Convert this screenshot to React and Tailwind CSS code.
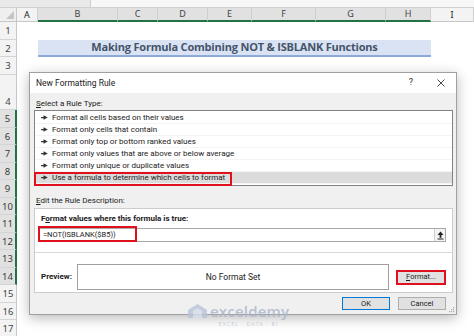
const cols = [
  { l: 'A', w: 'w-[21px]', sel: false },
  { l: 'B', w: 'w-[80px]', sel: true },
  { l: 'C', w: 'w-[40px]', sel: true },
  { l: 'D', w: 'w-[50px]', sel: true },
  { l: 'E', w: 'w-[44px]', sel: true },
  { l: 'F', w: 'w-[64px]', sel: true },
  { l: 'G', w: 'w-[70px]', sel: true },
  { l: 'H', w: 'w-[45px]', sel: true },
  { l: 'I', w: 'w-[43px]', sel: false },
];

const rows = Array.from({ length: 17 }, (_, i) => ({
  n: i + 1,
  h: i === 3 ? 'h-[35.5px]' : 'h-[17.5px]',
  sel: i >= 4 && i <= 13,
}));

const ruleTypes = [
  'Format all cells based on their values',
  'Format only cells that contain',
  'Format only top or bottom ranked values',
  'Format only values that are above or below average',
  'Format only unique or duplicate values',
  'Use a formula to determine which cells to format',
];

const Pointer = () => (
  <svg width="7" height="5" viewBox="0 0 7 5" className="shrink-0">
    <rect x="0" y="2" width="3" height="1.2" fill="#333" />
    <polygon points="2.5,0.3 6.8,2.6 2.5,4.8" fill="#333" />
  </svg>
);

const RowHeader = ({ row }) => (
  <div
    className={
      'w-[17px] shrink-0 flex items-end justify-center text-[9.5px] leading-none border-b border-[#d4d4d4] ' +
      (row.sel
        ? 'bg-[#e1e1e1] text-[#3a3a3a] border-r-2 border-r-[#217346]'
        : 'bg-[#f3f3f3] text-[#444] border-r border-r-[#c8c8c8]')
    }
  >
    <span className="mb-[3px]">{row.n}</span>
  </div>
);

const Sheet = () => (
  <div className="flex flex-col">
    {/* formula bar edge */}
    <div className="h-[8px] flex bg-[#e9e9e9] border-b border-[#d0d0d0]">
      <div className="w-[90px]" />
      <div className="flex-1 bg-[#f7f7f7] border-l border-[#d0d0d0]" />
    </div>
    {/* column headers */}
    <div className="h-[14px] flex text-[9px] text-[#444]">
      <div className="w-[17px] shrink-0 bg-[#efefef] border-r border-b border-[#c8c8c8] relative">
        <svg width="8" height="8" className="absolute right-[2px] bottom-[2px]">
          <polygon points="8,0 8,8 0,8" fill="#c4c4c4" />
        </svg>
      </div>
      {cols.map((c) => (
        <div
          key={c.l}
          className={
            c.w +
            ' shrink-0 flex items-center justify-center border-r border-[#cfcfcf] ' +
            (c.sel ? 'bg-[#e1e1e1] border-b-2 border-b-[#217346]' : 'bg-[#f3f3f3] border-b border-b-[#c8c8c8] text-[#222]')
          }
        >
          {c.l}
        </div>
      ))}
    </div>
    {rows.map((r) => (
      <div key={r.n} className={r.h + ' flex shrink-0'}>
        <RowHeader row={r} />
        {r.n === 2 ? (
          <>
            <div className="w-[21px] shrink-0" />
            <div className="w-[393px] shrink-0 bg-[#dae3f3] border-b-2 border-[#8eaadb] flex items-center justify-center font-['Open_Sans',sans-serif] font-bold text-[11px] text-[#44546a] tracking-[-0.2px]">
              Making Formula Combining NOT &amp; ISBLANK Functions
            </div>
            <div className="flex-1" />
          </>
        ) : (
          <div className="flex-1 bg-white" />
        )}
      </div>
    ))}
  </div>
);

const Dialog = () => (
  <div className="absolute left-[29px] top-[72px] w-[428px] h-[243px] flex flex-col bg-white border border-[#a0a0a0] shadow-[0_3px_12px_rgba(0,0,0,0.28)] text-[#1a1a1a] font-['Roboto',sans-serif] text-[8px]">
    <div className="h-[20px] shrink-0 flex items-center px-[5px] bg-white">
      <span className="text-[8.5px] pl-[1px]">New Formatting Rule</span>
      <span className="ml-auto text-[9px] text-[#333] mr-[24px]">?</span>
      <svg width="8" height="8" viewBox="0 0 8 8" className="mr-[6px]">
        <path d="M0.5 0.5 L7.5 7.5 M7.5 0.5 L0.5 7.5" stroke="#333" strokeWidth="0.9" />
      </svg>
    </div>
    <div className="flex-1 bg-[#f0f0f0] px-[4px] flex flex-col relative">
      <div className="pt-[5px] h-[17px] px-[2px] leading-[12px]">
        <span className="underline">S</span>elect a Rule Type:
      </div>
      <div className="w-[419px] h-[76px] border border-[#828282] bg-white py-[1px]">
        {ruleTypes.map((t, i) => (
          <div
            key={t}
            className={
              'h-[12px] flex items-center gap-[4px] pl-[6px] border-b border-[#f4f4f4] ' +
              (i === 5 ? 'bg-[#dcdcdc]' : '')
            }
          >
            <Pointer />
            <span>{t}</span>
          </div>
        ))}
      </div>
      <div className="mt-[9px] h-[13px] px-[2px] leading-[12px]">
        <span className="underline">E</span>dit the Rule Description:
      </div>
      <div className="w-[419px] h-[85px] border border-[#cccccc] bg-white flex flex-col">
        <div className="pt-[4px] h-[16px] pl-[6px] leading-[12px] font-bold">
          F<span className="underline">o</span>rmat values where this formula is true:
        </div>
        <div className="mt-[3px] ml-[4px] mr-[6px] h-[14px] flex border border-[#a8a8a8] bg-white">
          <div className="flex-1 flex items-center pl-[3px] text-[7.5px]">=NOT(ISBLANK($B5))</div>
          <div className="w-[11px] border-l border-[#cfcfcf] bg-[#f4f4f4] flex items-center justify-center">
            <svg width="7" height="9" viewBox="0 0 7 9">
              <polygon points="3.5,0.5 6.5,4 0.5,4" fill="#222" />
              <rect x="2.6" y="3.8" width="1.8" height="3" fill="#222" />
              <rect x="0.5" y="7.5" width="6" height="1" fill="#222" />
            </svg>
          </div>
        </div>
        <div className="mt-[10px] border-t border-[#d8d8d8]" />
        <div className="mt-[11px] flex items-center pl-[6px] pr-[6px]">
          <span className="w-[36px] font-bold">Preview:</span>
          <div className="w-[312px] h-[26px] border border-[#a0a0a0] bg-white flex items-center justify-center text-[8.5px]">
            No Format Set
          </div>
          <div className="ml-[7px] w-[50px] h-[15px] border-2 border-[#e0101c] bg-[#e1e1e1] flex items-center justify-center text-[7.5px]">
            <span className="underline">F</span>ormat...
          </div>
        </div>
      </div>
      <div className="mt-[4px] flex justify-end gap-[8px] pr-[6px] text-[7.5px]">
        <div className="w-[48px] h-[13px] border border-[#0078d7] bg-[#e1e1e1] flex items-center justify-center">OK</div>
        <div className="w-[48px] h-[13px] border border-[#adadad] bg-[#e1e1e1] flex items-center justify-center">Cancel</div>
      </div>
      <svg width="6" height="6" viewBox="0 0 6 6" className="absolute right-[1px] bottom-[1px]">
        <rect x="4" y="0" width="1.2" height="1.2" fill="#b0b0b0" />
        <rect x="2" y="2" width="1.2" height="1.2" fill="#b0b0b0" />
        <rect x="4" y="2" width="1.2" height="1.2" fill="#b0b0b0" />
        <rect x="0" y="4" width="1.2" height="1.2" fill="#b0b0b0" />
        <rect x="2" y="4" width="1.2" height="1.2" fill="#b0b0b0" />
        <rect x="4" y="4" width="1.2" height="1.2" fill="#b0b0b0" />
      </svg>
    </div>
    {/* annotation boxes */}
    <div className="absolute left-[4px] top-[99px] w-[198px] h-[14px] border-2 border-[#e0101c]" />
    <div className="absolute left-[8px] top-[153px] w-[99px] h-[16px] border-2 border-[#e0101c]" />
  </div>
);

const Watermark = () => (
  <div className="absolute left-[188px] top-[304px] flex flex-col items-center opacity-80 pointer-events-none">
    <div className="flex items-center gap-[3px]">
      <svg width="19" height="14" viewBox="0 0 19 14">
        <polygon points="9.5,0 19,6 19,14 0,14 0,6" fill="#b9c4d8" />
        <polygon points="9.5,4 14,7 14,14 5,14 5,7" fill="#d6deea" />
      </svg>
      <span className="font-['Open_Sans',sans-serif] font-semibold text-[15px] leading-[14px] text-[#aab6cc] tracking-[0.2px]">exceldemy</span>
    </div>
    <span className="ml-[20px] mt-[3px] font-['Open_Sans',sans-serif] text-[5px] leading-[6px] tracking-[1.2px] text-[#b8c1d2]">EXCEL · DATA · BI</span>
  </div>
);

export default function App() {
  return (
    <div className="w-[474px] h-[336px] relative overflow-hidden bg-white font-['Noto_Sans',sans-serif]">
      <Sheet />
      <Dialog />
      <Watermark />
    </div>
  );
}
